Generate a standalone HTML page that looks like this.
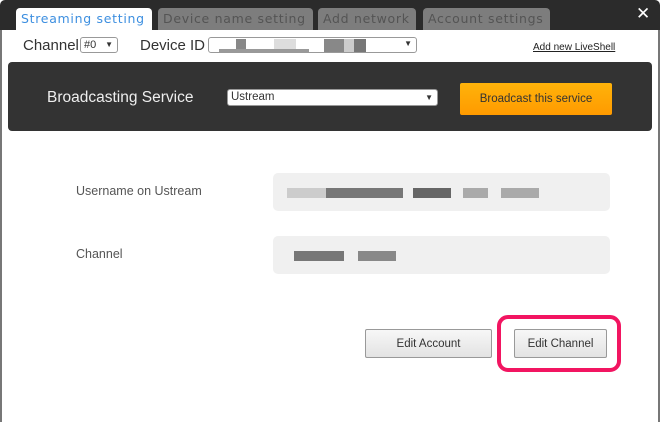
<!DOCTYPE html>
<html><head><style>
*{margin:0;padding:0;box-sizing:border-box}
body{width:660px;height:422px;background:#fff;position:relative;overflow:hidden;font-family:"Liberation Sans","DejaVu Sans",sans-serif}
.abs{position:absolute}
.top{left:0;top:0;width:660px;height:30px;background:#2b2b2b;border-radius:5px 5px 0 0}
.tab{top:8px;height:22px;border-radius:4px 4px 0 0;font-family:"DejaVu Sans",sans-serif;font-size:12.5px;letter-spacing:0.7px;line-height:22px;padding-left:5px;background:#7d7d7d;color:#545454;white-space:nowrap;overflow:hidden}
.edge{top:30px;width:2px;height:392px;background:#777}
.sel{background:#fff;border:1px solid #999;border-radius:3px;font-size:11px;color:#333}
.fld{background:#f0f0f0;border-radius:5px}
.btn{background:linear-gradient(#f7f7f7,#e3e3e3);border:1px solid #999;border-radius:2px;font-size:11.5px;color:#333;text-align:center;line-height:28px}
.px{position:absolute;height:10px}
</style></head><body>
<div class="abs top"></div>
<div class="abs tab" style="left:16px;width:136px;background:#fff;color:#3d8fe0">Streaming setting</div>
<div class="abs tab" style="left:158px;width:155px">Device name setting</div>
<div class="abs tab" style="left:318px;width:98px">Add network</div>
<div class="abs tab" style="left:423px;width:127px">Account settings</div>
<div class="abs" style="left:636px;top:4px;color:#fff;font-size:17px;font-family:'DejaVu Sans',sans-serif">✕</div>
<div class="abs edge" style="left:0"></div>
<div class="abs edge" style="right:0"></div>

<div class="abs" style="left:23px;top:37px;font-size:15px;color:#333">Channel</div>
<div class="abs sel" style="left:80px;top:37px;width:38px;height:16px;line-height:14px;padding-left:3px">#0 <span style="position:absolute;right:4px;font-size:8px">▼</span></div>
<div class="abs" style="left:140px;top:37px;font-size:15px;color:#333">Device ID</div>
<div class="abs sel" style="left:208px;top:37px;width:209px;height:16px;overflow:hidden">
<div class="px" style="left:27px;top:1px;width:10px;height:14px;background:#888"></div>
<div class="px" style="left:65px;top:1px;width:22px;height:14px;background:#ddd"></div>
<div class="px" style="left:115px;top:1px;width:20px;height:14px;background:#888"></div>
<div class="px" style="left:135px;top:1px;width:10px;height:14px;background:#ccc"></div>
<div class="px" style="left:145px;top:1px;width:12px;height:14px;background:#777"></div>
<div class="px" style="left:10px;top:11px;width:90px;height:3px;background:#999"></div>
<span style="position:absolute;right:4px;top:1px;font-size:8px">▼</span></div>
<div class="abs" style="left:533px;top:42px;font-size:10px;color:#222;text-decoration:underline">Add new LiveShell</div>

<div class="abs" style="left:8px;top:62px;width:644px;height:69px;background:#333;border-radius:4px"></div>
<div class="abs" style="left:47px;top:89px;font-size:15.5px;color:#eee">Broadcasting Service</div>
<div class="abs sel" style="left:227px;top:89px;width:211px;height:17px;line-height:15px;padding-left:3px;font-size:11.5px">Ustream<span style="position:absolute;right:4px;font-size:8px">▼</span></div>
<div class="abs" style="left:460px;top:83px;width:152px;height:32px;background:linear-gradient(#ffb30a,#ff9a00);border-radius:2px;font-size:11.5px;color:#333;text-align:center;line-height:32px">Broadcast this service</div>

<div class="abs" style="left:76px;top:184px;font-size:12.5px;color:#555">Username on Ustream</div>
<div class="abs fld" style="left:273px;top:173px;width:337px;height:38px">
<div class="px" style="left:14px;top:15px;width:40px;background:#ccc"></div>
<div class="px" style="left:53px;top:15px;width:77px;background:#777"></div>
<div class="px" style="left:140px;top:15px;width:38px;background:#666"></div>
<div class="px" style="left:190px;top:15px;width:25px;background:#aaa"></div>
<div class="px" style="left:228px;top:15px;width:38px;background:#aaa"></div>
</div>
<div class="abs" style="left:76px;top:247px;font-size:12.5px;color:#555">Channel</div>
<div class="abs fld" style="left:273px;top:236px;width:337px;height:38px">
<div class="px" style="left:21px;top:15px;width:50px;background:#777"></div>
<div class="px" style="left:85px;top:15px;width:38px;background:#888"></div>
</div>

<div class="abs btn" style="left:365px;top:329px;width:127px;height:29px">Edit Account</div>
<div class="abs" style="left:497px;top:315px;width:124px;height:57px;border:4px solid #f21561;border-radius:11px"></div>
<div class="abs btn" style="left:514px;top:329px;width:93px;height:29px">Edit Channel</div>
</body></html>
